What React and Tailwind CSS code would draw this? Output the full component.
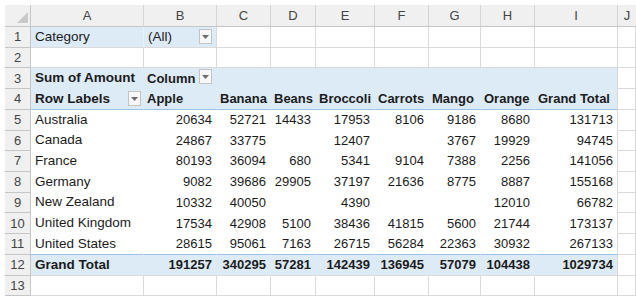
import React from 'react';

const letters = ['A', 'B', 'C', 'D', 'E', 'F', 'G', 'H', 'I', 'J'];
const fruit = ['Apple', 'Banana', 'Beans', 'Broccoli', 'Carrots', 'Mango', 'Orange', 'Grand Total'];

const data = [
  ['Australia', 20634, 52721, 14433, 17953, 8106, 9186, 8680, 131713],
  ['Canada', 24867, 33775, '', 12407, '', 3767, 19929, 94745],
  ['France', 80193, 36094, 680, 5341, 9104, 7388, 2256, 141056],
  ['Germany', 9082, 39686, 29905, 37197, 21636, 8775, 8887, 155168],
  ['New Zealand', 10332, 40050, '', 4390, '', '', 12010, 66782],
  ['United Kingdom', 17534, 42908, 5100, 38436, 41815, 5600, 21744, 173137],
  ['United States', 28615, 95061, 7163, 26715, 56284, 22363, 30932, 267133],
];
const totals = ['Grand Total', 191257, 340295, 57281, 142439, 136945, 57079, 104438, 1029734];

// little excel filter button
function Drop({ className }) {
  return (
    <div className={`absolute w-[13px] h-[15px] border border-[#c3c3c3] bg-[#f7f7f7] flex items-center justify-center ${className}`}>
      <svg width="7" height="4" viewBox="0 0 7 4">
        <path d="M0 0H7L3.5 4Z" fill="#6b6b6b" />
      </svg>
    </div>
  );
}

function Cell({ className = '', children }) {
  return (
    <div className={`relative flex items-center whitespace-nowrap border-r border-b ${className}`}>
      {children}
    </div>
  );
}

const grid = 'border-[#dadada] bg-white';
const rowHead = 'justify-center bg-[#f0f0f0] border-[#c6c6c6] text-[#444] text-[13px]';

export default function App() {
  const rows = [];

  // row 1
  rows.push(
    <Cell key="r1" className={rowHead}>1</Cell>,
    <Cell key="a1" className="bg-[#ddebf7] border-r-[#e8f0f9] border-b-[#dadada] pl-[4px]">Category</Cell>,
    <Cell key="b1" className="bg-[#ddebf7] border-r-[#dadada] border-b-[#dadada] pl-[4px]">
      (All)
      <Drop className="right-[4px] top-[2px]" />
    </Cell>
  );
  for (let c = 2; c < 10; c++) rows.push(<Cell key={'1-' + c} className={grid} />);

  // row 2
  rows.push(<Cell key="r2" className={rowHead}>2</Cell>);
  for (let c = 0; c < 10; c++) rows.push(<Cell key={'2-' + c} className={grid} />);

  // row 3
  rows.push(
    <Cell key="r3" className={rowHead}>3</Cell>,
    <Cell key="a3" className="bg-[#ddebf7] border-[#ddebf7] pl-[4px] font-bold">Sum of Amount</Cell>,
    <Cell key="b3" className="bg-[#ddebf7] border-[#ddebf7] pl-[3px] font-bold text-[13px]">
      Column
      <Drop className="right-[4px] top-[1px]" />
    </Cell>
  );
  for (let c = 2; c < 8; c++) rows.push(<Cell key={'3-' + c} className="bg-[#ddebf7] border-[#ddebf7]" />);
  rows.push(
    <Cell key="3-8" className="bg-[#ddebf7] border-b-[#ddebf7] border-r-[#dadada]" />,
    <Cell key="3-9" className={grid} />
  );

  // row 4
  rows.push(
    <Cell key="r4" className={rowHead}>4</Cell>,
    <Cell key="a4" className="bg-[#ddebf7] border-r-[#ddebf7] border-b-[#9bc2e6] pl-[4px] font-bold">
      Row Labels
      <Drop className="right-[2px] top-[2px]" />
    </Cell>
  );
  fruit.forEach((f, i) =>
    rows.push(
      <Cell
        key={'4-' + i}
        className={`bg-[#ddebf7] border-b-[#9bc2e6] pl-[3px] font-bold text-[13px] ${i === 7 ? 'border-r-[#dadada]' : 'border-r-[#ddebf7]'}`}
      >
        {f}
      </Cell>
    )
  );
  rows.push(<Cell key="4-9" className={grid} />);

  // data rows 5-11
  data.forEach((r, ri) => {
    const last = ri === data.length - 1;
    rows.push(
      <Cell key={'r' + (ri + 5)} className={rowHead}>
        {ri + 5}
      </Cell>
    );
    r.forEach((v, ci) =>
      rows.push(
        <Cell
          key={ri + '-' + ci}
          className={`bg-white ${last ? 'border-b-[#9bc2e6]' : 'border-b-white'} ${ci === 8 ? 'border-r-[#dadada]' : 'border-r-white'} ${ci === 0 ? 'pl-[4px]' : 'justify-end pr-[4px] text-[13px]'}`}
        >
          {v}
        </Cell>
      )
    );
    rows.push(<Cell key={ri + '-j'} className={grid} />);
  });

  // row 12
  rows.push(<Cell key="r12" className={rowHead}>12</Cell>);
  totals.forEach((v, ci) =>
    rows.push(
      <Cell
        key={'t-' + ci}
        className={`bg-[#ddebf7] border-b-[#dadada] font-bold ${ci === 8 ? 'border-r-[#dadada]' : 'border-r-[#ddebf7]'} ${ci === 0 ? 'pl-[4px]' : 'justify-end pr-[4px] text-[13px]'}`}
      >
        {v}
      </Cell>
    )
  );
  rows.push(<Cell key="t-j" className={grid} />);

  // row 13
  rows.push(<Cell key="r13" className={rowHead}>13</Cell>);
  for (let c = 0; c < 10; c++) rows.push(<Cell key={'13-' + c} className={grid} />);

  return (
    <div className="w-[636px] h-[300px] bg-white overflow-hidden pt-[5px] pl-[5px]">
      <div
        className="grid grid-cols-[26px_113px_73px_54px_45px_59px_54px_52px_54px_83px_18px] grid-rows-[22px_repeat(13,20.72px)] text-[13.5px] text-[#1b1b1b]"
        style={{ fontFamily: '"Liberation Sans", Arial, sans-serif' }}
      >
        {/* corner */}
        <div className="relative bg-[#f0f0f0] border-r border-b border-[#c6c6c6]">
          <svg className="absolute right-[2px] bottom-[3px]" width="11" height="11" viewBox="0 0 11 11">
            <path d="M11 0V11H0Z" fill="#c9c9c9" />
          </svg>
        </div>
        {letters.map((l, i) => (
          <div
            key={l}
            className={`flex items-center justify-center bg-[#f0f0f0] border-b border-[#c6c6c6] text-[#444] text-[13px] ${i < 9 ? 'border-r border-r-[#d4d4d4]' : ''}`}
          >
            {l}
          </div>
        ))}
        {rows}
      </div>
    </div>
  );
}
